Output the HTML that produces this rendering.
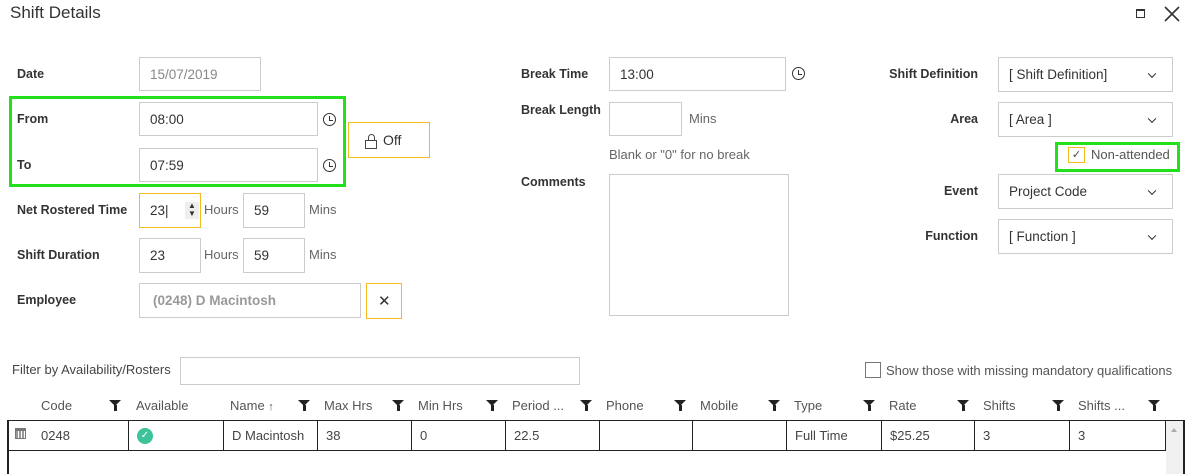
<!DOCTYPE html>
<html><head><meta charset="utf-8"><style>
*{box-sizing:border-box;margin:0;padding:0}
body{width:1186px;height:474px;background:#fff;font-family:"Liberation Sans",sans-serif;font-size:13px;color:#333;position:relative;overflow:hidden}
.a{position:absolute}
.lbl{position:absolute;font-weight:bold;font-size:12.5px;color:#333}
.rl{text-align:right;width:120px}
.in{position:absolute;border:1px solid #ccc;background:#fff;padding-left:10px;font-size:13.5px;color:#333;display:flex;align-items:center}
.sel::after{content:"";position:absolute;right:17px;top:50%;width:5px;height:5px;border-right:1.8px solid #222;border-bottom:1.8px solid #222;transform:translateY(-70%) rotate(45deg)}
.unit{position:absolute;color:#666;font-size:13px}
.clk{position:absolute;width:13px;height:13px;border:1.5px solid #333;border-radius:50%}
.clk::after{content:"";position:absolute;left:4.5px;top:1.5px;width:3px;height:4px;border-left:1.3px solid #333;border-bottom:1.3px solid #333}
.th{position:absolute;top:398px;color:#555;font-size:13px}
.fil{position:absolute;top:400px;width:0;height:0;border-left:6px solid transparent;border-right:6px solid transparent;border-top:6px solid #222}
.fil::after{content:"";position:absolute;left:-1.5px;top:-1px;width:3px;height:6px;background:#222}
.td{position:absolute;top:420px;height:31px;border:1.5px solid #222;border-left:none;padding-left:8px;display:flex;align-items:center;font-size:13px;color:#444}
</style></head><body>
<div class="a" style="left:10px;top:3px;font-size:17px;color:#333">Shift Details</div>
<div class="a" style="left:1136px;top:9px;width:9px;height:9px;border:1px solid #333;border-top-width:2.5px"></div>
<svg class="a" style="left:1164px;top:6px" width="16" height="16"><path d="M1 1L15 15M15 1L1 15" stroke="#333" stroke-width="1.6"/></svg>

<div class="lbl" style="left:17px;top:67px">Date</div>
<div class="in" style="left:139px;top:57px;width:122px;height:34px;color:#888">15/07/2019</div>
<div class="a" style="left:9px;top:96px;width:337px;height:91px;border:3px solid #22e01a"></div>
<div class="lbl" style="left:17px;top:112px">From</div>
<div class="in" style="left:139px;top:102px;width:179px;height:34px">08:00</div>
<div class="clk" style="left:323px;top:113px"></div>
<div class="lbl" style="left:17px;top:158px">To</div>
<div class="in" style="left:139px;top:148px;width:179px;height:34px">07:59</div>
<div class="clk" style="left:323px;top:159px"></div>
<div class="in" style="left:348px;top:122px;width:82px;height:36px;border-color:#f4bb20;padding-left:16px;font-size:14px"><span style="display:inline-block;width:12px;height:9px;border:1px solid #444;margin:8px 6px 0 0;position:relative"><span style="position:absolute;left:1.5px;top:-7px;width:7px;height:7px;border:1px solid #444;border-bottom:none;border-radius:4px 4px 0 0"></span></span>Off</div>

<div class="lbl" style="left:17px;top:203px">Net Rostered Time</div>
<div class="in" style="left:139px;top:193px;width:62px;height:35px;border-color:#f4bb20">23|<span style="position:absolute;right:1px;top:8px;width:14px;height:17px;background:#eee;font-size:8px;line-height:8px;text-align:center">▲<br>▼</span></div>
<div class="unit" style="left:204px;top:202px">Hours</div>
<div class="in" style="left:243px;top:193px;width:62px;height:35px">59</div>
<div class="unit" style="left:309px;top:202px">Mins</div>
<div class="lbl" style="left:17px;top:248px">Shift Duration</div>
<div class="in" style="left:139px;top:238px;width:62px;height:35px">23</div>
<div class="unit" style="left:204px;top:247px">Hours</div>
<div class="in" style="left:243px;top:238px;width:62px;height:35px">59</div>
<div class="unit" style="left:309px;top:247px">Mins</div>
<div class="lbl" style="left:17px;top:293px">Employee</div>
<div class="in" style="left:139px;top:283px;width:222px;height:35px;color:#999;font-weight:bold;padding-left:13px">(0248) D Macintosh</div>
<div class="in" style="left:366px;top:283px;width:36px;height:36px;border-color:#f4bb20;padding-left:11px;font-size:15px">✕</div>

<div class="lbl" style="left:521px;top:67px">Break Time</div>
<div class="in" style="left:609px;top:57px;width:177px;height:34px">13:00</div>
<div class="clk" style="left:792px;top:67px"></div>
<div class="lbl" style="left:521px;top:103px">Break Length</div>
<div class="in" style="left:609px;top:102px;width:73px;height:34px"></div>
<div class="unit" style="left:689px;top:111px">Mins</div>
<div class="unit" style="left:609px;top:147px">Blank or "0" for no break</div>
<div class="lbl" style="left:521px;top:175px">Comments</div>
<div class="in" style="left:609px;top:174px;width:180px;height:142px"></div>

<div class="lbl rl" style="left:858px;top:67px">Shift Definition</div>
<div class="in sel" style="left:998px;top:57px;width:175px;height:35px">[ Shift Definition]</div>
<div class="lbl rl" style="left:858px;top:112px">Area</div>
<div class="in sel" style="left:998px;top:102px;width:175px;height:35px">[ Area ]</div>
<div class="a" style="left:1055px;top:142px;width:125px;height:30px;border:3px solid #22e01a"></div>
<div class="a" style="left:1068px;top:147px;width:17px;height:16px;border:1px solid #f4bb20;font-size:11px;text-align:center;line-height:14px;color:#444">✓</div>
<div class="unit" style="left:1091px;top:147px;color:#555">Non-attended</div>
<div class="lbl rl" style="left:858px;top:184px">Event</div>
<div class="in sel" style="left:998px;top:174px;width:175px;height:35px">Project Code</div>
<div class="lbl rl" style="left:858px;top:229px">Function</div>
<div class="in sel" style="left:998px;top:219px;width:175px;height:35px">[ Function ]</div>

<div class="a" style="left:12px;top:362px;color:#444">Filter by Availability/Rosters</div>
<div class="in" style="left:180px;top:357px;width:400px;height:28px"></div>
<div class="a" style="left:865px;top:362px;width:16px;height:16px;border:1px solid #777"></div>
<div class="a" style="left:886px;top:363px;color:#555">Show those with missing mandatory qualifications</div>

<div class="th" style="left:41px">Code</div><div class="fil" style="left:109px"></div>
<div class="th" style="left:136px">Available</div>
<div class="th" style="left:230px">Name <span style="font-size:11px">↑</span></div><div class="fil" style="left:298px"></div>
<div class="th" style="left:324px">Max Hrs</div><div class="fil" style="left:392px"></div>
<div class="th" style="left:418px">Min Hrs</div><div class="fil" style="left:486px"></div>
<div class="th" style="left:512px">Period ...</div><div class="fil" style="left:580px"></div>
<div class="th" style="left:606px">Phone</div><div class="fil" style="left:674px"></div>
<div class="th" style="left:700px">Mobile</div><div class="fil" style="left:768px"></div>
<div class="th" style="left:794px">Type</div><div class="fil" style="left:863px"></div>
<div class="th" style="left:889px">Rate</div><div class="fil" style="left:957px"></div>
<div class="th" style="left:983px">Shifts</div><div class="fil" style="left:1052px"></div>
<div class="th" style="left:1078px">Shifts ...</div><div class="fil" style="left:1148px"></div>

<div class="a" style="left:7px;top:420px;width:1.5px;height:54px;background:#222"></div>
<div class="td" style="left:7px;width:122px;padding-left:34px">0248</div>
<div class="a" style="left:15px;top:428px;width:11px;height:11px;border:1px solid #777;border-top:3px solid #777;background:repeating-linear-gradient(90deg,#999 0 2px,#fff 2px 3px)"></div>
<div class="td" style="left:129px;width:95px"><span style="width:16px;height:16px;border-radius:50%;background:#3cc39a;color:#fff;font-size:10px;text-align:center;line-height:16px">✓</span></div>
<div class="td" style="left:224px;width:94px">D Macintosh</div>
<div class="td" style="left:318px;width:94px">38</div>
<div class="td" style="left:412px;width:94px">0</div>
<div class="td" style="left:506px;width:94px">22.5</div>
<div class="td" style="left:600px;width:93px"></div>
<div class="td" style="left:693px;width:94px"></div>
<div class="td" style="left:787px;width:95px">Full Time</div>
<div class="td" style="left:882px;width:93px">$25.25</div>
<div class="td" style="left:975px;width:95px">3</div>
<div class="td" style="left:1070px;width:96px">3</div>
<div class="a" style="left:1166px;top:420px;width:17px;height:54px;background:#f0f0f0;border-top:1.5px solid #222"></div>
<div class="a" style="left:1171px;top:428px;width:0;height:0;border-left:3px solid transparent;border-right:3px solid transparent;border-bottom:4px solid #aaa"></div>
<div class="a" style="left:1183px;top:420px;width:1.5px;height:54px;background:#222"></div>
</body></html>
